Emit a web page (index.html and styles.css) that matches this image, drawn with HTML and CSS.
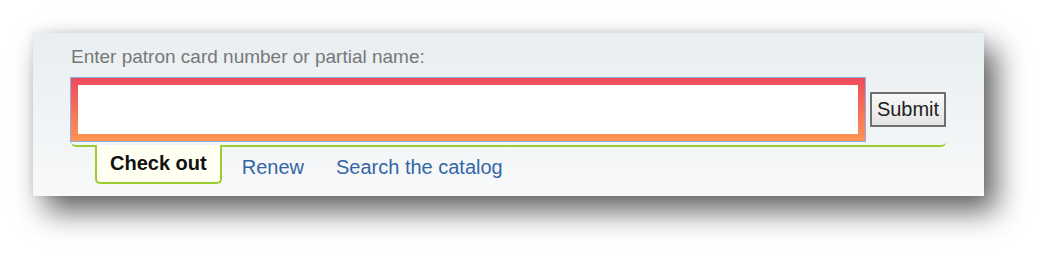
FILE: index.html
```html
<!DOCTYPE html>
<html lang="en">
<head>
    <meta charset="UTF-8">
    <title>Check out</title>
    <link rel="stylesheet" href="styles.css">
</head>
<body>

    <div class="panel">
        <form class="patron-search" onsubmit="return false;">
            <label for="findborrower">Enter patron card number or partial name:</label>
            <div class="search-row">
                <input type="text" id="findborrower" class="patron-input" autocomplete="off">
                <button type="submit" class="submit-btn">Submit</button>
            </div>
        </form>

        <ul class="tabs">
            <li class="tab active"><a href="#">Check out</a></li>
            <li class="tab"><a href="#">Renew</a></li>
            <li class="tab"><a href="#">Search the catalog</a></li>
        </ul>
    </div>

</body>
</html>
```

FILE: styles.css
```css
html, body {
    height: 261px;
}
body {
    margin: 0;
    padding-top: 33px;
    box-sizing: border-box;
    background-color: #fff;
    font-family: "Liberation Sans", Arial, sans-serif;
}
.panel {
    margin-left: 33px;
    width: 951px;
    height: 163px;
    box-sizing: border-box;
    padding: 13px 38px 0 38px;
    background: linear-gradient(#e8eef1, #f8f9fa);
    box-shadow: 12px 15px 28px rgba(0,0,0,0.62), -1px -1px 8px rgba(0,0,0,0.08);
}
.patron-search {
    border-bottom: 2px solid #9acd32;
    border-radius: 0 0 5px 5px;
    padding-bottom: 4px;
}
label {
    display: block;
    font-size: 19px;
    line-height: 22px;
    color: #787878;
    margin-bottom: 10px;
}
.search-row {
    display: flex;
    align-items: center;
    gap: 5px;
}
.patron-input {
    width: 794px;
    height: 63px;
    box-sizing: border-box;
    margin: 0;
    border: 7px solid;
    border-image: linear-gradient(#f04b5c, #ff9452) 7;
    box-shadow: 0 0 0 1px #8eaee6;
    outline: none;
    background: #fff;
}
.submit-btn {
    width: 76px;
    height: 35px;
    padding: 0;
    font-family: "Liberation Sans", Arial, sans-serif;
    font-size: 20px;
    color: #222;
    background: linear-gradient(#f8f8f8, #e4e4e4);
    border: 2px solid #6e6e6e;
    border-radius: 1px;
}
.tabs {
    display: flex;
    list-style: none;
    margin: 0 0 0 24px;
    padding: 0;
    font-size: 20px;
    line-height: 24px;
}
.tab a {
    display: block;
    padding: 8px 16px 0 16px;
    color: #3466a5;
    text-decoration: none;
}
.tab.active {
    margin-top: -2px;
    margin-right: 4px;
    background-color: #fffff2;
    border: 2px solid #9acd32;
    border-top: none;
    border-radius: 0 0 5px 5px;
}
.tab.active a {
    padding: 6px 13px 7px 13px;
    font-weight: bold;
    color: #111;
}
```
